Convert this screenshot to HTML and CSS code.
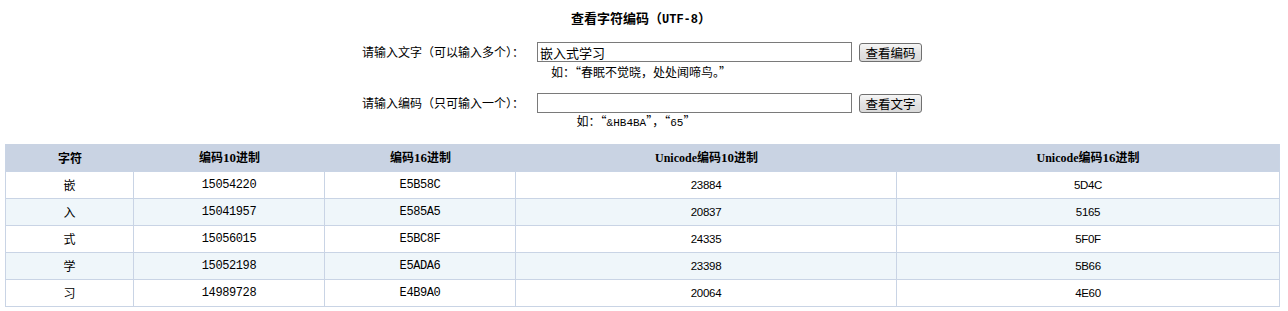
FILE: index.html
```html
<!DOCTYPE html>
<html lang="zh-CN">
<head>
<meta charset="utf-8">
<title>查看字符编码（UTF-8）</title>
<link rel="stylesheet" href="styles.css">
</head>
<body>
<div class="page">
  <h1 class="title">查看字符编码<span class="paren">（</span><span class="mono">UTF-8</span><span class="paren">）</span></h1>

  <div class="form-row row-one">
    <label class="label">请输入文字（可以输入多个）：</label>
    <input class="field" type="text" value="嵌入式学习">
    <button class="btn" type="button">查看编码</button>
  </div>
  <div class="hint hint-one">如：“春眠不觉晓，处处闻啼鸟。”</div>

  <div class="form-row row-two">
    <label class="label">请输入编码（只可输入一个）：</label>
    <input class="field" type="text" value="">
    <button class="btn" type="button">查看文字</button>
  </div>
  <div class="hint hint-two">如：“<span class="mono">&amp;HB4BA</span>”，“<span class="mono">65</span>”</div>

  <table class="codes">
    <colgroup>
      <col class="c1"><col class="c2"><col class="c3"><col class="c4"><col class="c5">
    </colgroup>
    <thead>
      <tr>
        <th>字符</th>
        <th>编码<span class="hnum">10</span>进制</th>
        <th>编码<span class="hnum">16</span>进制</th>
        <th><span class="hlat">Unicode</span>编码<span class="hnum">10</span>进制</th>
        <th><span class="hlat">Unicode</span>编码<span class="hnum">16</span>进制</th>
      </tr>
    </thead>
    <tbody>
      <tr><td>嵌</td><td class="num">15054220</td><td class="num">E5B58C</td><td class="uni">23884</td><td class="uni">5D4C</td></tr>
      <tr class="alt"><td>入</td><td class="num">15041957</td><td class="num">E585A5</td><td class="uni">20837</td><td class="uni">5165</td></tr>
      <tr><td>式</td><td class="num">15056015</td><td class="num">E5BC8F</td><td class="uni">24335</td><td class="uni">5F0F</td></tr>
      <tr class="alt"><td>学</td><td class="num">15052198</td><td class="num">E5ADA6</td><td class="uni">23398</td><td class="uni">5B66</td></tr>
      <tr><td>习</td><td class="num">14989728</td><td class="num">E4B9A0</td><td class="uni">20064</td><td class="uni">4E60</td></tr>
    </tbody>
  </table>
</div>
</body>
</html>
```

FILE: styles.css
```css
html, body {
  margin: 0;
  padding: 0;
  background: #ffffff;
}

body {
  font-family: "Noto Sans CJK SC", "Liberation Sans", sans-serif;
  font-size: 12px;
  color: #000000;
}

.page {
  padding-top: 8px;
}

.title {
  margin: 0;
  height: 20px;
  line-height: 20px;
  font-size: 13px;
  font-weight: bold;
  text-align: center;
  padding-right: 6px;
}

.title .mono {
  font-family: "Liberation Mono", monospace;
  font-size: 12px;
  font-weight: bold;
}

.form-row {
  display: flex;
  justify-content: center;
  align-items: center;
  height: 20px;
  padding-right: 4px;
}

.row-one {
  margin-top: 14px;
}

.row-two {
  margin-top: 11px;
}

.label {
  width: 168px;
  line-height: 20px;
  white-space: nowrap;
  margin-right: 7px;
}

.field {
  box-sizing: border-box;
  width: 315px;
  height: 20px;
  margin: 0 7px 0 0;
  padding: 0 2px;
  border: 1px solid #7a7a7a;
  font-family: "Noto Sans CJK SC", sans-serif;
  font-size: 13px;
  line-height: 18px;
  color: #000;
  background: #fff;
  outline: none;
}

.btn {
  box-sizing: border-box;
  width: 63px;
  height: 19px;
  margin: 0;
  padding: 0;
  border: 1px solid #707070;
  border-radius: 3px;
  background: linear-gradient(#f6f6f6, #e3e3e3 50%, #d9d9d9);
  font-family: "Noto Sans CJK SC", sans-serif;
  font-size: 12.5px;
  line-height: 17px;
  color: #000;
}

.hint {
  text-align: center;
  height: 20px;
  line-height: 20px;
}

.hint .mono {
  font-family: "Liberation Mono", monospace;
  font-size: 11px;
  line-height: 1;
}

.hint-one {
  padding-right: 6px;
}

.hint-two {
  height: 16px;
  line-height: 16px;
  padding-right: 16px;
}

.codes {
  margin: 15px 0 0 5px;
  width: 1275px;
  table-layout: fixed;
  border-collapse: separate;
  border-spacing: 0;
  border: 1px solid #c9d4e5;
  border-top: none;
}

.c1 { width: 128px; }
.c2 { width: 191px; }
.c3 { width: 191px; }
.c4 { width: 381px; }
.c5 { width: 382px; }

.codes th {
  height: 27px;
  padding: 0;
  background: #c9d3e3;
  font-weight: bold;
  font-size: 12px;
  line-height: 14px;
  text-align: center;
  vertical-align: middle;
}

.codes .hnum {
  font-family: "Liberation Serif", serif;
  font-size: 13px;
  font-weight: bold;
}

.codes .hlat {
  font-family: "Liberation Serif", serif;
  font-size: 12px;
  font-weight: bold;
}

.codes td {
  height: 26px;
  padding: 0;
  border-top: 1px solid #c9d4e5;
  text-align: center;
  vertical-align: middle;
  line-height: 14px;
}

.codes td:not(:last-child) {
  border-right: 1px solid #c9d4e5;
}

.codes tr.alt td {
  background: #eff6fa;
}

.codes td.num {
  font-family: "Liberation Mono", monospace;
  font-size: 12px;
  letter-spacing: -0.4px;
}

.codes td.uni {
  font-family: "Liberation Sans", sans-serif;
  font-size: 11.5px;
  letter-spacing: -0.3px;
}
```
